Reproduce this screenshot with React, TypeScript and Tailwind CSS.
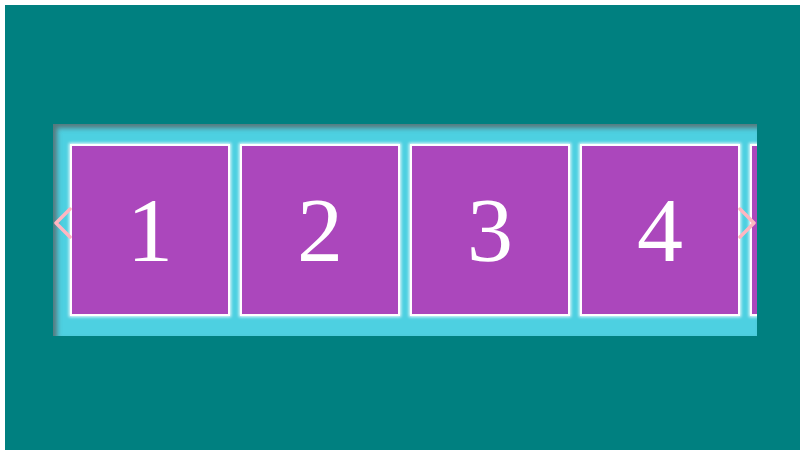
import React from 'react';

const slides = [1, 2, 3, 4, 5];

const Chevron: React.FC<{ dir: 'left' | 'right' }> = ({ dir }) => (
  <svg width="18" height="32" viewBox="0 0 18 32" fill="none">
    <polyline
      points={dir === 'left' ? '16,2 2,16 16,30' : '2,2 16,16 2,30'}
      stroke="#ffb6c1"
      strokeWidth="3.5"
      strokeLinecap="round"
      strokeLinejoin="round"
    />
  </svg>
);

export default function App() {
  return (
    <div className="w-[800px] h-[450px] overflow-hidden bg-white">
      {/* teal stage, offset by the 5px page margin */}
      <div className="ml-[5px] mt-[5px] w-[800px] h-[450px] bg-[#008080] flex items-center justify-center">
        <div className="relative w-[704px] h-[212px] bg-[#4dd0e1] overflow-hidden shadow-[inset_4px_4px_5px_rgba(90,90,90,0.75)]">
          <div className="flex gap-[10px] pl-[17px] py-[20px]">
            {slides.map((n) => (
              <div
                key={n}
                className="shrink-0 w-[160px] h-[172px] bg-[#ab47bc] border-2 border-white shadow-[0_0_3px_1px_rgba(255,255,255,0.9)] flex items-center justify-center text-white text-[92px] leading-none font-['Liberation_Serif',serif]"
              >
                {n}
              </div>
            ))}
          </div>

          {/* navegación */}
          <div className="absolute left-[1px] top-[83px]">
            <Chevron dir="left" />
          </div>
          <div className="absolute right-[1px] top-[83px]">
            <Chevron dir="right" />
          </div>
        </div>
      </div>
    </div>
  );
}
